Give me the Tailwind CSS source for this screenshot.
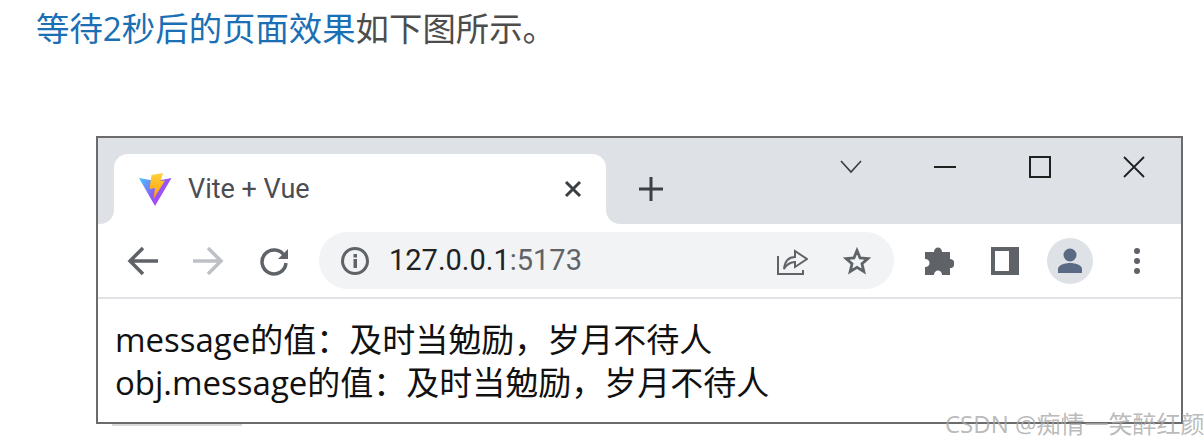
<!DOCTYPE html>
<html lang="zh-CN">
<head>
    <meta charset="UTF-8">
    <title>等待2秒后的页面效果</title>
    <script src="https://cdn.jsdelivr.net/npm/@tailwindcss/browser@4"></script>
</head>
<body class="relative h-[443px] w-[1204px] overflow-hidden bg-white font-['Open_Sans','Noto_Sans_CJK_SC',sans-serif]">
    <!-- article line -->
    <p class="h-[136px] pl-[36px] pt-[7px] text-[33.4px] leading-[42px] text-[#4d4d4d]"><span class="text-[#1a6fb5]">等待2秒后的页面效果</span>如下图所示。</p>

    <!-- browser window -->
    <div class="ml-[96px] flex h-[288px] w-[1087px] flex-col border-2 border-[#6b6b6b] bg-white">
        <!-- title bar -->
        <div class="flex h-[86px] shrink-0">
            <div class="w-[16px] rounded-br-[14px] bg-[#dee1e6]"></div>
            <div class="w-[492px] bg-[#dee1e6] pt-[16px]">
                <div class="flex h-[70px] items-center rounded-t-[14px] bg-white pl-[24px] pr-[24px]">
                    <svg class="h-[35px] w-[35px]" viewBox="0 0 35 35">
                        <defs>
                            <linearGradient id="viteA" x1="0" y1="0" x2="1" y2="0.7">
                                <stop offset="0" stop-color="#41c8ff"/>
                                <stop offset=".55" stop-color="#8a5cf6"/>
                                <stop offset="1" stop-color="#c23cf0"/>
                            </linearGradient>
                            <linearGradient id="viteB" x1="0" y1="0" x2="0" y2="1">
                                <stop offset="0" stop-color="#ffd23a"/>
                                <stop offset="1" stop-color="#ff9d0a"/>
                            </linearGradient>
                        </defs>
                        <path fill="url(#viteA)" d="M1 6 17 34 33.500 6 23 8 12 8Z"/>
                        <path fill="url(#viteB)" d="M13.500 3 25 1 22.500 9 27 8.500 15.500 27 17 16 11.500 17Z"/>
                    </svg>
                    <span class="ml-[15px] text-[27px] text-[#4a4d52] font-['Roboto',sans-serif]">Vite + Vue</span>
                    <svg class="ml-auto h-[18px] w-[18px]" viewBox="0 0 18 18" fill="none" stroke="#3c4043" stroke-width="3"><path d="M2 2 16 16M16 2 2 16"/></svg>
                </div>
            </div>
            <div class="flex flex-1 rounded-bl-[14px] bg-[#dee1e6] pt-[15px]">
                <svg class="ml-[33px] mt-[24px] h-[24px] w-[24px]" viewBox="0 0 24 24" fill="none" stroke="#3c4043" stroke-width="3"><path d="M12 0V24M0 12H24"/></svg>
                <div class="ml-[176px] flex h-[28px] items-center">
                    <svg class="h-[16px] w-[24px]" viewBox="0 0 24 16" fill="none" stroke="#3c3c3c" stroke-width="1.600"><path d="M2 2 12 13 22 2"/></svg>
                    <svg class="ml-[71px] h-[4px] w-[24px]" viewBox="0 0 24 4"><rect width="22" height="2" y="1" fill="#202020"/></svg>
                    <svg class="ml-[70px] h-[24px] w-[24px]" viewBox="0 0 24 24" fill="none" stroke="#202020" stroke-width="2"><rect x="2" y="2" width="20" height="20"/></svg>
                    <svg class="ml-[70px] h-[24px] w-[24px]" viewBox="0 0 24 24" fill="none" stroke="#202020" stroke-width="1.800"><path d="M2 2 22 22M22 2 2 22"/></svg>
                </div>
            </div>
        </div>

        <!-- toolbar -->
        <div class="flex h-[75px] shrink-0 items-center border-b-2 border-[#e1e3e6] pl-[29px]">
            <svg class="h-[32px] w-[32px]" viewBox="0 0 32 32" fill="none" stroke="#5f6368" stroke-width="3.500"><path d="M31 16H3M16 3 3 16 16 29"/></svg>
            <svg class="ml-[33px] h-[32px] w-[32px]" viewBox="0 0 32 32" fill="none" stroke="#bdc1c6" stroke-width="3.500"><path d="M1 16H29M16 3 29 16 16 29"/></svg>
            <svg class="ml-[33px] h-[32px] w-[32px]" viewBox="0 0 32 32" fill="none"><path stroke="#5f6368" stroke-width="3.500" d="M27.500 11A12 12 0 1 0 29 18"/><path fill="#5f6368" d="M31 4V14H21Z"/></svg>
            <!-- omnibox -->
            <div class="ml-[30px] flex h-[57px] w-[575px] items-center rounded-full bg-[#f1f3f4] pl-[21px] pr-[23px]">
                <svg class="h-[30px] w-[30px]" viewBox="0 0 30 30" fill="none"><circle cx="15" cy="15" r="12.500" stroke="#5f6368" stroke-width="3"/><rect x="13.500" y="13" width="3.500" height="9" fill="#5f6368"/><rect x="13.500" y="8" width="3.500" height="3.500" fill="#5f6368"/></svg>
                <span class="ml-[19px] text-[29px] text-[#202124] font-['Roboto',sans-serif]">127.0.0.1<span class="text-[#5f6368]">:5173</span></span>
                <svg class="ml-auto h-[32px] w-[32px]" viewBox="0 0 32 32" fill="none" stroke="#5f6368" stroke-width="2"><path d="M2 11V29H27V25M8 24C9 15 14 12 19 12V6L31 14 19 22V17C14 17 11 19 8 24Z"/></svg>
                <svg class="ml-[35px] h-[28px] w-[28px]" viewBox="0 0 32 32" fill="none" stroke="#5f6368" stroke-width="3.200"><path d="M16 4 19.500 12.500 28.500 13.200 21.700 19.200 23.800 28 16 23.300 8.200 28 10.300 19.200 3.500 13.200 12.500 12.500Z"/></svg>
            </div>
            <svg class="ml-[28px] h-[32px] w-[32px]" viewBox="0 0 32 32" fill="#5f6368"><path d="M12 7C12 1 20 1 20 7H28V14C34 14 34 23 28 23V30H20C20 24 12 24 12 30H3V22C9 22 9 14 3 14V7Z"/></svg>
            <svg class="ml-[36px] h-[30px] w-[30px]" viewBox="0 0 30 30"><path fill="#5f6368" fill-rule="evenodd" d="M1 1H29V29H1ZM5 5V25H19V5Z"/></svg>
            <div class="ml-[27px] flex h-[46px] w-[46px] items-center justify-center rounded-full bg-[#dee1e6]">
                <svg class="h-[28px] w-[28px]" viewBox="0 0 28 28" fill="#5a6a85"><circle cx="14" cy="8" r="6.500"/><path d="M2 26V22C2 18 9 16 14 16S26 18 26 22V26Z"/></svg>
            </div>
            <svg class="ml-[40px] h-[30px] w-[8px]" viewBox="0 0 8 30" fill="#5f6368"><circle cx="4" cy="5" r="3"/><circle cx="4" cy="15" r="3"/><circle cx="4" cy="25" r="3"/></svg>
        </div>

        <!-- page content -->
        <div class="pl-[17px] pt-[19px] text-[33px] leading-[43px] text-[#111]">
            <p>message的值：及时当勉励，岁月不待人</p>
            <p>obj.message的值：及时当勉励，岁月不待人</p>
        </div>
    </div>

    <!-- leftovers of the cropped picture under the window -->
    <span class="absolute left-[112px] top-[424px] h-[2px] w-[130px] bg-black/15"></span>

    <!-- watermark -->
    <span class="absolute left-[945px] top-[407px] whitespace-nowrap text-[24px] leading-[34px] text-[#a8a8a8]/80">CSDN @痴情一笑醉红颜</span>
</body>
</html>
